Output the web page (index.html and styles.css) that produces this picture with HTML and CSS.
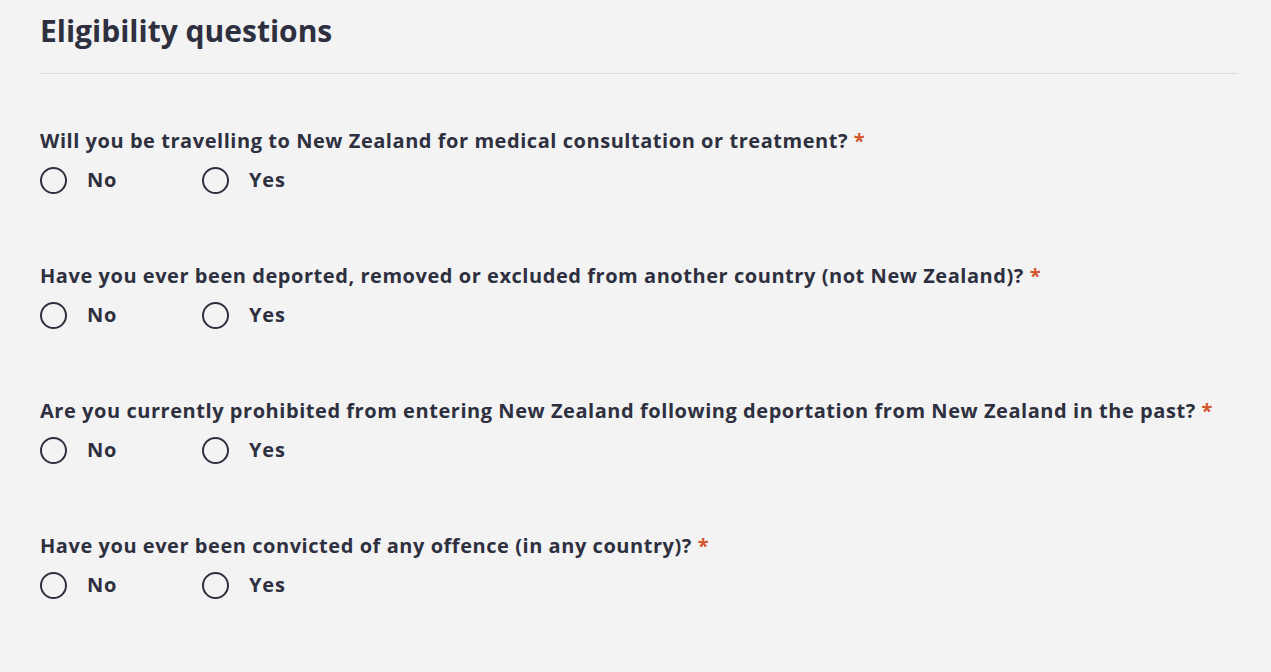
FILE: index.html
```html
<!DOCTYPE html>
<html lang="en">
<head>
    <meta charset="UTF-8">
    <title>Eligibility questions</title>
    <link rel="stylesheet" href="styles.css">
</head>
<body>
    <div class="page">
        <h1>Eligibility questions</h1>
        <hr class="divider">

        <fieldset class="question">
            <legend>Will you be travelling to New Zealand for medical consultation or treatment? <span class="req">*</span></legend>
            <div class="options">
                <label class="option"><input type="radio" name="q1" value="no"><span>No</span></label>
                <label class="option"><input type="radio" name="q1" value="yes"><span>Yes</span></label>
            </div>
        </fieldset>

        <fieldset class="question">
            <legend>Have you ever been deported, removed or excluded from another country (not New Zealand)? <span class="req">*</span></legend>
            <div class="options">
                <label class="option"><input type="radio" name="q2" value="no"><span>No</span></label>
                <label class="option"><input type="radio" name="q2" value="yes"><span>Yes</span></label>
            </div>
        </fieldset>

        <fieldset class="question">
            <legend>Are you currently prohibited from entering New Zealand following deportation from New Zealand in the past? <span class="req">*</span></legend>
            <div class="options">
                <label class="option"><input type="radio" name="q3" value="no"><span>No</span></label>
                <label class="option"><input type="radio" name="q3" value="yes"><span>Yes</span></label>
            </div>
        </fieldset>

        <fieldset class="question">
            <legend>Have you ever been convicted of any offence (in any country)? <span class="req">*</span></legend>
            <div class="options">
                <label class="option"><input type="radio" name="q4" value="no"><span>No</span></label>
                <label class="option"><input type="radio" name="q4" value="yes"><span>Yes</span></label>
            </div>
        </fieldset>
    </div>
</body>
</html>
```

FILE: styles.css
```css
body {
    margin: 0;
    background-color: #f3f3f3;
    font-family: "Open Sans", Arial, sans-serif;
    color: #2e303f;
}
.page {
    padding: 11px 33px 0 40px;
}
h1 {
    margin: 0;
    font-size: 30px;
    font-weight: 700;
    line-height: 40px;
}
.divider {
    border: none;
    border-top: 1px solid #dcdcdc;
    margin: 22px 0 52px 0;
}
.question {
    border: none;
    margin: 0 0 66px 0;
    padding: 0;
}
.question legend {
    padding: 0;
    font-size: 20px;
    font-weight: 700;
    line-height: 30px;
    letter-spacing: 0.55px;
}
.req {
    color: #d4552b;
}
.options {
    display: flex;
    margin-top: 9px;
}
.option {
    display: flex;
    align-items: center;
    width: 162px;
    font-size: 20px;
    font-weight: 700;
    line-height: 30px;
    letter-spacing: 0.8px;
    cursor: pointer;
}
.option input {
    appearance: none;
    width: 27px;
    height: 27px;
    margin: 0 20px 0 0;
    border: 2.5px solid #2e303f;
    border-radius: 50%;
    background: transparent;
}
.option input:checked {
    background: radial-gradient(#2e303f 40%, transparent 45%);
}
```
